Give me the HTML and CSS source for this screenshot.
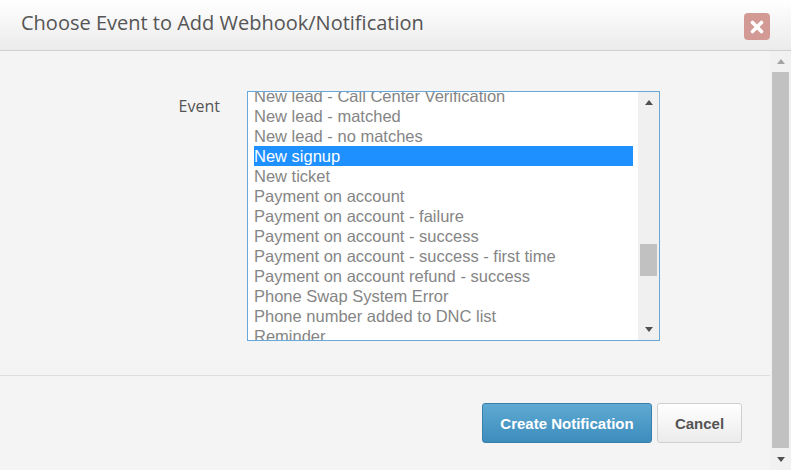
FILE: index.html
```html
<!DOCTYPE html>
<html>
<head>
<meta charset="utf-8">
<link rel="stylesheet" href="styles.css">
</head>
<body>
<div class="modal">
  <div class="modal-header">
    <h4 class="modal-title">Choose Event to Add Webhook/Notification</h4>
    <button class="close-btn" aria-label="Close">
      <svg width="14" height="14" viewBox="0 0 14 14"><path d="M2.5 2.5 L11.5 11.5 M11.5 2.5 L2.5 11.5" stroke="#fff" stroke-width="3.6" stroke-linecap="round"/></svg>
    </button>
  </div>
  <div class="modal-main">
    <div class="modal-content">
      <div class="modal-body">
        <div class="form-row">
          <label class="form-label">Event</label>
          <div class="listbox">
            <div class="list-area">
              <ul class="options">
                <li>New lead - Call Center Verification</li>
                <li>New lead - matched</li>
                <li>New lead - no matches</li>
                <li class="selected">New signup</li>
                <li>New ticket</li>
                <li>Payment on account</li>
                <li>Payment on account - failure</li>
                <li>Payment on account - success</li>
                <li>Payment on account - success - first time</li>
                <li>Payment on account refund - success</li>
                <li>Phone Swap System Error</li>
                <li>Phone number added to DNC list</li>
                <li>Reminder</li>
              </ul>
            </div>
            <div class="list-scroll">
              <div class="arrow-btn"><span class="tri-up dark"></span></div>
              <div class="list-track"><div class="list-thumb"></div></div>
              <div class="arrow-btn"><span class="tri-down dark"></span></div>
            </div>
          </div>
        </div>
      </div>
      <div class="modal-footer">
        <button class="btn btn-primary">Create Notification</button>
        <button class="btn btn-default">Cancel</button>
      </div>
    </div>
    <div class="page-scroll">
      <div class="page-arrow"><span class="tri-up light"></span></div>
      <div class="page-track"><div class="page-thumb"></div></div>
      <div class="page-arrow"><span class="tri-down dark"></span></div>
    </div>
  </div>
</div>
</body>
</html>
```

FILE: styles.css
```css
* { box-sizing: border-box; }
html, body { margin: 0; padding: 0; }
body {
  width: 791px;
  height: 470px;
  overflow: hidden;
  background: #f4f4f4;
  font-family: "Open Sans", "Liberation Sans", sans-serif;
}
.modal { display: flex; flex-direction: column; height: 470px; }
.modal-header {
  height: 51px;
  flex: none;
  display: flex;
  align-items: flex-start;
  justify-content: space-between;
  padding: 0 21px;
  background: linear-gradient(#ffffff, #ebebeb);
  border-bottom: 1px solid #cfcfcf;
}
.modal-title {
  margin: 0;
  padding-top: 9px;
  font-size: 20px;
  font-weight: 400;
  color: #555;
  line-height: 28px;
}
.close-btn {
  margin-top: 13px;
  width: 26px;
  height: 27px;
  padding: 0;
  border: none;
  border-radius: 4px;
  background: #d39a95;
  display: flex;
  align-items: center;
  justify-content: center;
}
.modal-main { flex: 1; display: flex; min-height: 0; }
.modal-content { flex: 1; display: flex; flex-direction: column; }
.modal-body {
  height: 325px;
  padding-top: 40px;
  border-bottom: 1px solid #dedede;
}
.form-row { display: flex; align-items: flex-start; }
.form-label {
  width: 220px;
  text-align: right;
  font-size: 16px;
  color: #555;
  line-height: 20px;
  padding-top: 5px;
}
.listbox {
  margin-left: 27px;
  width: 413px;
  height: 250px;
  border: 1px solid #66a8d8;
  background: #fff;
  display: flex;
}
.list-area { flex: 1; overflow: hidden; padding: 0 5px 0 6px; }
.options {
  list-style: none;
  margin: -6px 0 0 0;
  padding: 0;
  font-family: "Liberation Sans", Arial, sans-serif;
  font-size: 16.5px;
  line-height: 20px;
  color: #858585;
}
.options li { height: 20px; white-space: nowrap; padding-top: 1px; line-height: 19px; }
.options li.selected { background: #1e90ff; color: #fff; }
.list-scroll {
  width: 21px;
  background: #f0f0f0;
  display: flex;
  flex-direction: column;
}
.arrow-btn { height: 21px; display: flex; align-items: center; justify-content: center; flex: none; }
.list-track { flex: 1; padding-top: 131px; }
.list-thumb { width: 17px; height: 32px; margin-left: 2px; background: #c1c1c1; }
.tri-up, .tri-down { width: 0; height: 0; border-left: 4px solid transparent; border-right: 4px solid transparent; }
.tri-up.dark { border-bottom: 5px solid #505050; }
.tri-up.light { border-bottom: 5px solid #a3a3a3; }
.tri-down.dark { border-top: 5px solid #505050; }
.list-scroll .arrow-btn:first-child { padding-left: 1px; }
.modal-footer {
  display: flex;
  justify-content: flex-end;
  gap: 5px;
  padding: 27px 28px 0 0;
}
.btn {
  height: 40px;
  border-radius: 3px;
  font-family: "Liberation Sans", Arial, sans-serif;
  font-size: 15px;
  font-weight: 700;
  padding: 0;
}
.btn-primary {
  width: 170px;
  color: #fff;
  background: linear-gradient(#5faad3, #3d8cbc);
  border: 1px solid #3a7fac;
}
.btn-default {
  width: 85px;
  color: #555;
  background: linear-gradient(#ffffff, #ebebeb);
  border: 1px solid #cfcfcf;
}
.page-scroll {
  width: 21px;
  background: #f1f1f1;
  display: flex;
  flex-direction: column;
}
.page-arrow { height: 21px; flex: none; display: flex; align-items: center; justify-content: center; padding-left: 1px; }
.page-track { flex: 1; }
.page-thumb { width: 17px; height: 376px; margin-left: 2px; background: #c1c1c1; }
```
